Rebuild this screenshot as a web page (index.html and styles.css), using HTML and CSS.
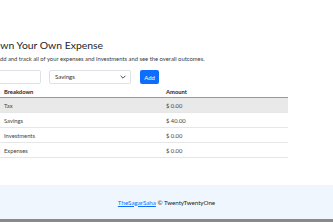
FILE: index.html
```html
<!DOCTYPE html>
<html lang="en">
<head>
<meta charset="utf-8">
<title>Own Your Own Expense</title>
<link rel="stylesheet" href="styles.css">
</head>
<body>
<main class="page">
  <h1 class="title">Own Your Own Expense</h1>
  <p class="lead">Add and track all of your expenses and investments and see the overall outcomes.</p>
  <form class="entry">
    <input class="field" type="text">
    <div class="select">Savings<svg class="chev" viewBox="0 0 10 6" width="6" height="4"><path d="M1 1l4 4 4-4" fill="none" stroke="#343a40" stroke-width="1.5"/></svg></div>
    <button class="btn" type="button">Add</button>
  </form>
  <table class="breakdown">
    <thead>
      <tr><th class="c1">Breakdown</th><th>Amount</th></tr>
    </thead>
    <tbody>
      <tr class="active"><td>Tax</td><td>$ 0.00</td></tr>
      <tr><td>Savings</td><td>$ 40.00</td></tr>
      <tr><td>Investments</td><td>$ 0.00</td></tr>
      <tr><td>Expenses</td><td>$ 0.00</td></tr>
    </tbody>
  </table>
</main>
<footer class="foot">
  <span><a href="#">TheSagarSaha</a> © TwentyTwentyOne</span>
</footer>
</body>
</html>
```
FILE: styles.css
```css
html, body {
  margin: 0;
  padding: 0;
}
body {
  width: 333px;
  height: 222px;
  overflow: hidden;
  display: flex;
  flex-direction: column;
  font-family: Lato, "Open Sans", sans-serif;
  color: #212529;
  background: #fff;
}
.page {
  padding-top: 38px;
}
.title {
  margin: 0 0 0 -8px;
  font-size: 10.4px;
  font-weight: 400;
  line-height: 15px;
  white-space: nowrap;
}
.lead {
  margin: 2px 0 0 -4px;
  font-size: 5.85px;
  line-height: 8px;
  color: #3a3a3a;
  white-space: nowrap;
}
.entry {
  display: flex;
  align-items: center;
  gap: 8px;
  margin: 7px 0 0 -20px;
  height: 14px;
}
.field {
  box-sizing: border-box;
  width: 61px;
  height: 14px;
  margin: 0;
  border: 1px solid #dee2e6;
  border-radius: 2px;
  padding: 0;
}
.select {
  box-sizing: border-box;
  width: 82px;
  height: 14px;
  border: 1px solid #dee2e6;
  border-radius: 2px;
  font-size: 6px;
  line-height: 12px;
  padding: 0 4px 0 5px;
  display: flex;
  justify-content: space-between;
  align-items: center;
  color: #333;
}
.chev { display: block; }
.btn {
  box-sizing: border-box;
  width: 19px;
  height: 14px;
  border: 0;
  border-radius: 2px;
  background: #0d6efd;
  color: #fff;
  font-family: inherit;
  font-size: 6px;
  padding: 0;
  margin-left: 1px;
}
.breakdown {
  margin-top: 1px;
  width: 288px;
  border-collapse: collapse;
  font-size: 5.8px;
  color: #444;
}
.breakdown th {
  text-align: left;
  font-weight: 700;
  height: 12px;
  padding: 0 4px;
  border-bottom: 1.5px solid #999;
  color: #212529;
}
.breakdown th.c1 { width: 154px; }
.breakdown td {
  height: 14px;
  padding: 0 4px;
  border-bottom: 1px solid #e6e6e6;
}
.breakdown tr.active td { background: #e9e9e9; }
.foot {
  margin-top: auto;
  height: 34px;
  background: #eff6fd;
  border-bottom: 3px solid #8a8a8a;
  display: flex;
  align-items: center;
  justify-content: center;
  font-size: 6.2px;
  color: #212529;
}
.foot a { color: #0d6efd; }
```
